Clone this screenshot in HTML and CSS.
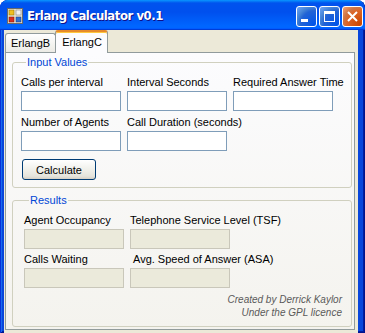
FILE: index.html
```html
<!DOCTYPE html>
<html lang="en">
<head>
    <meta charset="UTF-8">
    <title>Erlang Calculator v0.1</title>
    <link rel="stylesheet" href="styles.css">
</head>
<body>

<div class="window">
    <div class="titlebar">
        <svg class="app-icon" width="16" height="16" viewBox="0 0 16 16">
            <rect x="0.5" y="0.5" width="15" height="15" fill="#e8e4d0" stroke="#6a6a6a"/>
            <rect x="2" y="2" width="5" height="5" fill="#f0c020" stroke="#8a6a00" stroke-width="0.5"/>
            <rect x="9" y="2" width="5" height="5" fill="#f0f0f0" stroke="#707070" stroke-width="0.5"/>
            <rect x="2" y="9" width="5" height="5" fill="#d83020" stroke="#801000" stroke-width="0.5"/>
            <rect x="9" y="9" width="5" height="5" fill="#3070d0" stroke="#103080" stroke-width="0.5"/>
        </svg>
        <span class="title">Erlang Calculator v0.1</span>
        <div class="controls">
            <div class="ctl">
                <svg width="21" height="21" viewBox="0 0 21 21"><rect x="5" y="13" width="7" height="3" fill="#fff"/></svg>
            </div>
            <div class="ctl">
                <svg width="21" height="21" viewBox="0 0 21 21"><rect x="5.5" y="5.5" width="10" height="10" fill="none" stroke="#fff"/><rect x="5" y="5" width="11" height="3" fill="#fff"/></svg>
            </div>
            <div class="ctl close">
                <svg width="21" height="21" viewBox="0 0 21 21"><path d="M6 6 L15 15 M15 6 L6 15" stroke="#fff" stroke-width="2"/></svg>
            </div>
        </div>
    </div>

    <div class="client">
        <div class="tabs">
            <div class="tab">ErlangB</div>
            <div class="tab active">ErlangC</div>
        </div>

        <div class="panel">
            <fieldset class="group input-group">
                <legend>Input Values</legend>
                <div class="fields">
                    <div class="field">
                        <label>Calls per interval</label>
                        <input type="text" class="box">
                    </div>
                    <div class="field">
                        <label>Interval Seconds</label>
                        <input type="text" class="box">
                    </div>
                    <div class="field">
                        <label>Required Answer Time</label>
                        <input type="text" class="box">
                    </div>
                    <div class="field">
                        <label>Number of Agents</label>
                        <input type="text" class="box">
                    </div>
                    <div class="field">
                        <label>Call Duration (seconds)</label>
                        <input type="text" class="box">
                    </div>
                </div>
                <button type="button" class="calc-btn">Calculate</button>
            </fieldset>

            <fieldset class="group results-group">
                <legend>Results</legend>
                <div class="fields results">
                    <div class="field">
                        <label>Agent Occupancy</label>
                        <input type="text" class="box" disabled>
                    </div>
                    <div class="field">
                        <label>Telephone Service Level (TSF)</label>
                        <input type="text" class="box" disabled>
                    </div>
                    <div class="field">
                        <label>Calls Waiting</label>
                        <input type="text" class="box" disabled>
                    </div>
                    <div class="field">
                        <label class="indent">Avg. Speed of Answer (ASA)</label>
                        <input type="text" class="box" disabled>
                    </div>
                </div>
                <div class="credits">
                    <div>Created by Derrick Kaylor</div>
                    <div>Under the GPL licence</div>
                </div>
            </fieldset>
        </div>
    </div>
</div>

</body>
</html>
```

FILE: styles.css
```css
body {
    margin: 0;
    padding: 0;
    font-family: 'Liberation Sans', Arial, sans-serif;
    font-size: 11px;
    background: #ffffff;
}
.window {
    width: 365px;
    height: 333px;
    display: flex;
    flex-direction: column;
    background: #0846db;
    border-radius: 8px 8px 0 0;
    box-shadow: inset 1px 0 #0831d9, inset -1px -1px #00138c, inset 2px 0 #166aee, inset -2px -2px #001ea0;
    overflow: hidden;
}

/* Title bar */
.titlebar {
    height: 30px;
    flex: none;
    display: flex;
    align-items: center;
    padding: 0 0 0 7px;
    background: linear-gradient(to bottom, #0997ff 0%, #0053ee 10%, #0050ee 40%, #0066ff 86%, #0066ff 92%, #005bff 95%, #003dd7 97%, #003dd7 100%);
    border-radius: 8px 8px 0 0;
}
.app-icon {
    flex: none;
    margin-top: 1px;
}
.title {
    margin-left: 4px;
    color: #ffffff;
    font-family: 'DejaVu Sans Condensed', 'DejaVu Sans', sans-serif;
    font-weight: bold;
    font-size: 13px;
    letter-spacing: -0.45px;
    text-shadow: 1px 1px #0f1089;
    flex: 1;
}
.controls {
    display: flex;
    gap: 2px;
    margin-right: 2px;
    margin-top: 2px;
}
.ctl {
    width: 21px;
    height: 21px;
    box-sizing: border-box;
    border: 1px solid #ffffff;
    border-radius: 3px;
    background: radial-gradient(circle at 90% 90%, #0054e9 0%, #2263d5 55%, #4282d6 70%, #5a95e8 85%, #6aa3f5 100%);
    display: flex;
}
.ctl svg {
    margin: -1px;
}
.ctl.close {
    background: radial-gradient(circle at 90% 90%, #cc4600 0%, #dc6527 55%, #cd7546 70%, #e68b5a 85%, #f0a07a 100%);
}

/* Client area */
.client {
    flex: 1;
    margin: 0 7px 6px 4px;
    background: #ece9d8;
    display: flex;
    flex-direction: column;
    padding: 0 3px 3px 1px;
}
.tabs {
    display: flex;
    align-items: flex-end;
    height: 22px;
    position: relative;
    z-index: 1;
}
.tab {
    height: 18px;
    padding: 0 5px 0 5px;
    line-height: 18px;
    border: 1px solid #919b9c;
    border-bottom: none;
    border-radius: 3px 3px 0 0;
    background: linear-gradient(to bottom, #ffffff, #f3f3ef 60%, #ecebe5);
    color: #000;
    margin-bottom: 0;
}
.tab.active {
    height: 21px;
    line-height: 20px;
    padding: 0 5px 0 6px;
    margin-left: -1px;
    margin-bottom: -1px;
    background: #fcfcfe;
    border-top: 2px solid #e68b2c;
    box-shadow: inset 0 1px #ffc73c;
}
.panel {
    flex: 1;
    border: 1px solid #919b9c;
    background: linear-gradient(to bottom, #fcfcfe, #f4f3ee);
    display: flex;
    flex-direction: column;
    padding: 3px 2px 2px 6px;
}

/* Group boxes */
.group {
    margin: 0;
    border: 1px solid #d0d0bf;
    border-radius: 3px;
    padding: 6px 8px 7px 8px;
    min-width: 0;
}
.group legend {
    color: #0046d5;
    padding: 0 1px;
    margin-left: 5px;
    line-height: 13px;
}
.fields {
    display: grid;
    grid-template-columns: repeat(3, 100px);
    column-gap: 6px;
    row-gap: 4px;
}
.field label {
    display: block;
    line-height: 14px;
    margin-bottom: 2px;
    white-space: nowrap;
}
.box {
    display: block;
    width: 100px;
    height: 20px;
    box-sizing: border-box;
    border: 1px solid #7f9db9;
    background: #ffffff;
    margin: 0;
    padding: 0 3px;
    font: inherit;
}
.box:disabled {
    background: #ebeadb;
    border-color: #c9c7ba;
}
.calc-btn {
    display: block;
    margin: 8px 0 0 1px;
    width: 74px;
    height: 21px;
    border: 1px solid #003c74;
    border-radius: 3px;
    background: linear-gradient(to bottom, #ffffff, #f0f0ea 50%, #e5e4dc 85%, #d6d0c5);
    font: inherit;
    color: #000;
    padding: 0;
}

.results-group {
    margin-top: 6px;
    flex: 1;
    padding-left: 11px;
}
.results {
    grid-template-columns: repeat(2, 100px);
    row-gap: 3px;
}
.indent {
    padding-left: 3px;
}
.credits {
    margin-top: 5px;
    text-align: right;
    font-style: italic;
    color: #5a5a5a;
    font-size: 10px;
    line-height: 13px;
    padding-right: 1px;
}
```
